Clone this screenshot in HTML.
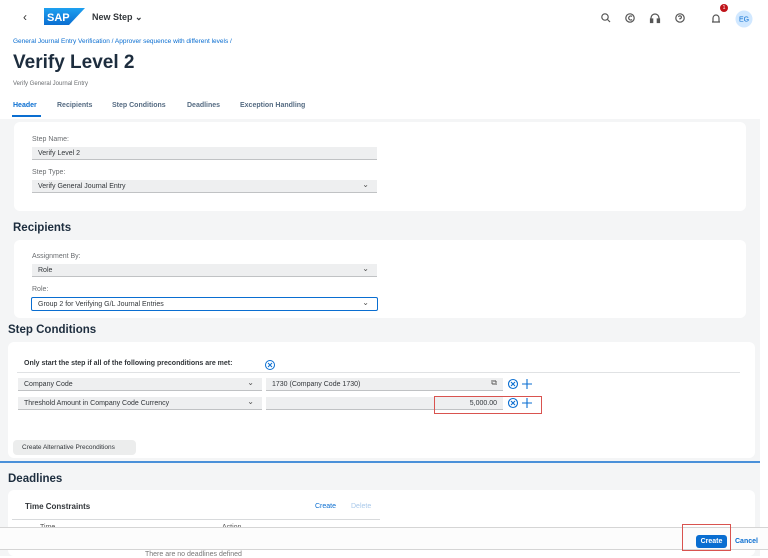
<!DOCTYPE html>
<html><head><style>
*{margin:0;padding:0;box-sizing:border-box}
body{width:768px;height:556px;overflow:hidden;background:#fff;font-family:"Liberation Sans",sans-serif;position:relative;color:#32363a}
.a{position:absolute}
.gray{background:#f4f5f6}
.card{background:#fff;border-radius:6px}
.lbl{font-size:7px;color:#6a6d70}
.inp{background:#eeeff0;border-bottom:1px solid #c0c2c4;font-size:7px;padding:3px 6px;line-height:7px}
.chev{position:absolute;right:8px;top:1px;font-size:8px;color:#555}
.h2{font-size:11.5px;font-weight:bold;color:#1d2d3e}
</style></head><body>
<div class="a gray" style="left:0;top:119px;width:760px;height:437px"></div>
<!-- top bar -->
<div class="a" style="left:23px;top:10px;font-size:12px;color:#333">‹</div>
<svg class="a" style="left:44px;top:8px" width="41" height="17"><defs><linearGradient id="g" x1="0" y1="0" x2="0" y2="1"><stop offset="0" stop-color="#1ea0f0"/><stop offset="1" stop-color="#0a6ed1"/></linearGradient></defs><polygon points="0,0 41,0 25,17 0,17" fill="url(#g)"/><text x="3" y="13" font-size="11" font-weight="bold" fill="#fff" font-family="Liberation Sans">SAP</text></svg>
<div class="a" style="left:92px;top:12px;font-size:9px;font-weight:bold;color:#32363a">New Step ⌄</div>
<svg class="a" style="left:598px;top:10px" width="160" height="20" fill="none" stroke="#555" stroke-width="1.2">
<circle cx="7" cy="7" r="3.2"/><line x1="9.5" y1="9.5" x2="12" y2="12"/>
<circle cx="32" cy="8" r="4.2"/><path d="M34 6.5a2 2 0 1 0 0 3"/>
<path d="M53 11v-3a4 4 0 0 1 8 0v3"/><rect x="52.5" y="9" width="2.2" height="3.5" fill="#555"/><rect x="59.3" y="9" width="2.2" height="3.5" fill="#555"/>
<circle cx="82" cy="8" r="4.2"/><path d="M80.6 7a1.4 1.4 0 1 1 1.4 1.6v.9"/>
<path d="M114 12h8M115 12v-4a3 3 0 0 1 6 0v4"/>
<circle cx="146" cy="9" r="8.5" fill="#d1e8ff" stroke="none"/>
<text x="146" y="11.5" font-size="7" fill="#0a6ed1" stroke="none" text-anchor="middle" font-family="Liberation Sans">EG</text>
</svg>
<div class="a" style="left:720px;top:4px;width:8px;height:8px;border-radius:50%;background:#c0141a;color:#fff;font-size:5px;text-align:center;line-height:8px">1</div>
<div class="a" style="left:13px;top:38px;font-size:6.5px;color:#0a6ed1">General Journal Entry Verification / Approver sequence with different levels /</div>
<div class="a" style="left:13px;top:52px;font-size:19px;font-weight:bold;color:#1d2d3e">Verify Level 2</div>
<div class="a" style="left:13px;top:81px;font-size:6px;color:#6a6d70">Verify General Journal Entry</div>
<div class="a" style="left:13px;top:102px;font-size:7px;font-weight:bold;color:#0a6ed1">Header</div>
<div class="a" style="left:57px;top:102px;font-size:7px;font-weight:bold;color:#556b82">Recipients</div>
<div class="a" style="left:112px;top:102px;font-size:7px;font-weight:bold;color:#556b82">Step Conditions</div>
<div class="a" style="left:187px;top:102px;font-size:7px;font-weight:bold;color:#556b82">Deadlines</div>
<div class="a" style="left:240px;top:102px;font-size:7px;font-weight:bold;color:#556b82">Exception Handling</div>
<div class="a" style="left:12px;top:115px;width:29px;height:2px;background:#0a6ed1"></div>
<!-- card1 -->
<div class="a card" style="left:14px;top:122px;width:732px;height:89px"></div>
<div class="a lbl" style="left:32px;top:136px">Step Name:</div>
<div class="a inp" style="left:32px;top:147px;width:345px;height:13px">Verify Level 2</div>
<div class="a lbl" style="left:32px;top:169px">Step Type:</div>
<div class="a inp" style="left:32px;top:180px;width:345px;height:13px">Verify General Journal Entry<span class="chev">⌄</span></div>
<div class="a h2" style="left:13px;top:222px">Recipients</div>
<div class="a card" style="left:14px;top:240px;width:732px;height:78px"></div>
<div class="a lbl" style="left:32px;top:253px">Assignment By:</div>
<div class="a inp" style="left:32px;top:264px;width:345px;height:13px">Role<span class="chev">⌄</span></div>
<div class="a lbl" style="left:32px;top:286px">Role:</div>
<div class="a inp" style="left:31px;top:297px;width:347px;height:14px;background:#fff;border:1px solid #0a6ed1;border-radius:2px">Group 2 for Verifying G/L Journal Entries<span class="chev">⌄</span></div>
<div class="a h2" style="left:8px;top:324px">Step Conditions</div>
<div class="a card" style="left:8px;top:342px;width:747px;height:116px"></div>
<div class="a" style="left:24px;top:360px;font-size:7px;font-weight:bold">Only start the step if all of the following preconditions are met:</div>
<svg class="a" style="left:264px;top:359px" width="12" height="12" fill="none" stroke="#0a6ed1" stroke-width="1"><circle cx="6" cy="6" r="4.5"/><path d="M4 4l4 4M8 4l-4 4"/></svg>
<div class="a" style="left:17px;top:372px;width:723px;height:1px;background:#e0e2e4"></div>
<div class="a inp" style="left:18px;top:378px;width:244px;height:13px">Company Code<span class="chev">⌄</span></div>
<div class="a inp" style="left:266px;top:378px;width:237px;height:13px">1730 (Company Code 1730)<span class="chev" style="right:6px">⧉</span></div>
<div class="a inp" style="left:18px;top:397px;width:244px;height:13px">Threshold Amount in Company Code Currency<span class="chev">⌄</span></div>
<div class="a inp" style="left:266px;top:397px;width:237px;height:13px;text-align:right">5,000.00</div>
<svg class="a" style="left:507px;top:378px" width="30" height="34" fill="none" stroke="#0a6ed1" stroke-width="1.1">
<circle cx="6" cy="6" r="4.5"/><path d="M4 4l4 4M8 4l-4 4M20 1v10M15 6h10"/>
<g transform="translate(0,19)"><circle cx="6" cy="6" r="4.5"/><path d="M4 4l4 4M8 4l-4 4M20 1v10M15 6h10"/></g>
</svg>
<div class="a" style="left:434px;top:396px;width:108px;height:18px;border:1.5px solid #d9534f"></div>
<div class="a" style="left:13px;top:440px;width:123px;height:15px;background:#eceded;border-radius:4px;font-size:6.5px;line-height:15px;padding-left:9px">Create Alternative Preconditions</div>
<div class="a" style="left:0;top:461px;width:760px;height:2px;background:#4a90d9"></div>
<div class="a h2" style="left:8px;top:473px">Deadlines</div>
<div class="a card" style="left:8px;top:490px;width:747px;height:66px"></div>
<div class="a" style="left:25px;top:502px;font-size:8px;font-weight:bold">Time Constraints</div>
<div class="a" style="left:315px;top:503px;font-size:7px;color:#0a6ed1">Create</div>
<div class="a" style="left:351px;top:503px;font-size:7px;color:#a8c8ea">Delete</div>
<div class="a" style="left:12px;top:519px;width:368px;height:1px;background:#d8dadc"></div>
<div class="a" style="left:40px;top:524px;font-size:7px;color:#555">Time</div>
<div class="a" style="left:222px;top:524px;font-size:7px;color:#555">Action</div>
<div class="a" style="left:145px;top:551px;font-size:7px;color:#777">There are no deadlines defined</div>
<!-- footer -->
<div class="a" style="left:0;top:527px;width:768px;height:23px;background:#fcfcfc;border-top:1px solid #d5d5d5;border-bottom:1px solid #d5d5d5"></div>
<div class="a" style="left:696px;top:535px;width:31px;height:13px;background:#0a6ed1;border-radius:3px;color:#fff;font-size:7px;font-weight:bold;text-align:center;line-height:13px">Create</div>
<div class="a" style="left:735px;top:538px;font-size:7px;color:#0a6ed1;font-weight:bold">Cancel</div>
<div class="a" style="left:682px;top:524px;width:49px;height:27px;border:1.5px solid #d9534f"></div>
</body></html>
